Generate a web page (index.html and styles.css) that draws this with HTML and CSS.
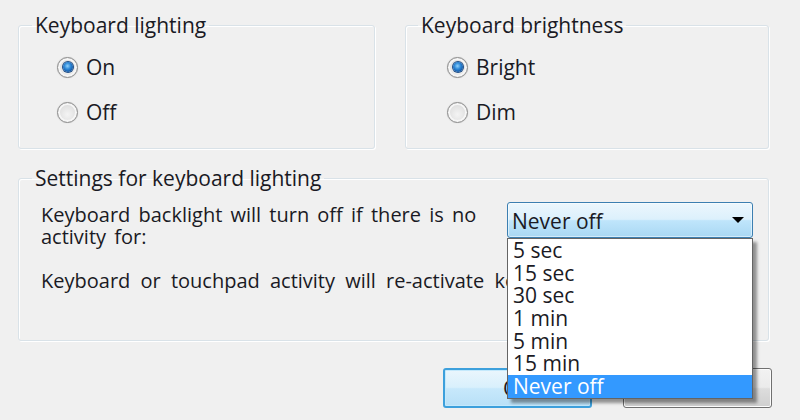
FILE: index.html
```html
<!DOCTYPE html>
<html>
<head>
<meta charset="utf-8">
<link rel="stylesheet" href="styles.css">
</head>
<body>
<div class="dialog">
  <div class="top-row">
    <fieldset class="group group-lighting">
      <legend>Keyboard lighting</legend>
      <div class="radios">
        <label class="radio"><span class="radio-dot checked"></span>On</label>
        <label class="radio"><span class="radio-dot"></span>Off</label>
      </div>
    </fieldset>
    <fieldset class="group group-brightness">
      <legend>Keyboard brightness</legend>
      <div class="radios radios-bright">
        <label class="radio"><span class="radio-dot checked"></span>Bright</label>
        <label class="radio"><span class="radio-dot"></span>Dim</label>
      </div>
    </fieldset>
  </div>
  <fieldset class="group group-settings">
    <legend>Settings for keyboard lighting</legend>
    <div class="settings-body">
      <div class="setting-row">
        <p class="desc">Keyboard backlight will turn off if there is no activity for:</p>
        <div class="combo">
          <div class="combo-box"><span class="combo-value">Never off</span><span class="combo-arrow"></span></div>
          <ul class="combo-list">
            <li>5 sec</li>
            <li>15 sec</li>
            <li>30 sec</li>
            <li>1 min</li>
            <li>5 min</li>
            <li>15 min</li>
            <li class="selected">Never off</li>
          </ul>
        </div>
      </div>
      <p class="note">Keyboard or touchpad activity will re-activate keyboard lighting.</p>
    </div>
  </fieldset>
  <div class="buttons">
    <button class="btn btn-default">OK</button>
    <button class="btn">Cancel</button>
  </div>
</div>
</body>
</html>
```
FILE: styles.css
```css
* { box-sizing: border-box; }
html, body {
  margin: 0;
  padding: 0;
  background: #f0f0f0;
  width: 800px;
  height: 420px;
  overflow: hidden;
}
body {
  font-family: "Open Sans", "Noto Sans", sans-serif;
  font-size: 21px;
  color: #1a1a24;
}
.dialog {
  padding: 13px 31px 0 18px;
}
.top-row {
  display: flex;
  gap: 30px;
}
.group {
  margin: 0;
  padding: 0;
  min-width: 0;
  border: 1px solid #d9e2e8;
  border-radius: 3px;
  box-shadow: inset 1px 1px 0 #fff, 1px 1px 0 #fff;
}
.group legend {
  margin-left: 13px;
  padding: 0 3px;
  line-height: 24px;
  height: 24px;
}
.group-lighting { width: 357px; }
.group-brightness { flex: 1; }
.group-brightness legend { margin-left: 12px; }
.radios {
  display: flex;
  flex-direction: column;
  gap: 15px;
  padding: 15px 0 21px 38px;
}
.radios-bright { padding-left: 41px; }
.radio {
  display: flex;
  align-items: center;
  gap: 8px;
  height: 30px;
  line-height: 24px;
}
.radio-dot {
  width: 21px;
  height: 21px;
  border-radius: 50%;
  border: 1px solid #8d8d8d;
  background: radial-gradient(circle at 50% 60%, #f4f4f4 0%, #e2e2e2 55%, #c9c9c9 100%);
  box-shadow: inset 0 0 0 2px #f6f6f6, 0 0 1px rgba(0,0,0,.25);
  display: flex;
  align-items: center;
  justify-content: center;
  flex: 0 0 21px;
}
.radio-dot.checked::after {
  content: "";
  width: 10px;
  height: 10px;
  border-radius: 50%;
  background: radial-gradient(circle at 45% 40%, #8fd1fb 0%, #2b86d6 40%, #0d4c9a 80%, #0a3570 100%);
  box-shadow: 0 0 0 1px #1f4e87;
}
.group-settings {
  margin-top: 17px;
}
.settings-body {
  padding: 12px 20px 48px 22px;
}
.setting-row {
  display: flex;
  align-items: flex-start;
}
.desc {
  margin: 2px 0 0 0;
  width: 466px;
  flex: 0 0 466px;
  font-size: 20px;
  line-height: 22px;
  word-spacing: 3px;
}
.note {
  margin: 22px 0 0 0;
  font-size: 20px;
  line-height: 22px;
  white-space: nowrap;
  word-spacing: 5px;
}
.combo {
  position: relative;
  width: 246px;
  flex: 0 0 246px;
}
.combo-box {
  height: 36px;
  border: 1px solid #3c7fb1;
  border-radius: 3px;
  background: linear-gradient(#ecf7fd 0%, #dcf0fc 48%, #bfe5fb 52%, #a9d8f3 100%);
  box-shadow: inset 0 0 0 1px rgba(255,255,255,.5);
  display: flex;
  align-items: center;
  justify-content: space-between;
  padding: 0 7px 0 4px;
}
.combo-value {
  line-height: 24px;
  padding-top: 1px;
}
.combo-arrow {
  width: 0;
  height: 0;
  border-left: 6px solid transparent;
  border-right: 6px solid transparent;
  border-top: 6px solid #000;
  margin-right: 1px;
}
.combo-list {
  position: absolute;
  top: 36px;
  left: 0;
  width: 246px;
  margin: 0;
  padding: 0;
  list-style: none;
  background: #fff;
  border: 1px solid #646464;
  box-shadow: 4px 4px 3px rgba(0,0,0,.4);
  z-index: 10;
}
.combo-list li {
  height: 22.7px;
  line-height: 22.7px;
  padding-left: 5px;
}
.combo-list li.selected {
  background: #3399ff;
  color: #fff;
}
.buttons {
  display: flex;
  justify-content: flex-end;
  gap: 31px;
  margin-top: 27px;
  margin-right: -3px;
}
.btn {
  width: 149px;
  height: 40px;
  font-family: inherit;
  font-size: 21px;
  color: #1a1a24;
  border: 1px solid #707070;
  border-radius: 3px;
  background: linear-gradient(#f2f2f2 0%, #ebebeb 48%, #dddddd 52%, #cfcfcf 100%);
  box-shadow: inset 0 0 0 1px #fcfcfc;
  padding: 0;
}
.btn-default {
  border: 2px solid #3da0dc;
  background: linear-gradient(#eaf6fd 0%, #d9f0fc 48%, #c7e8fb 52%, #b8e0f7 100%);
  box-shadow: inset 0 0 0 1px #c4e9fc;
}
```
